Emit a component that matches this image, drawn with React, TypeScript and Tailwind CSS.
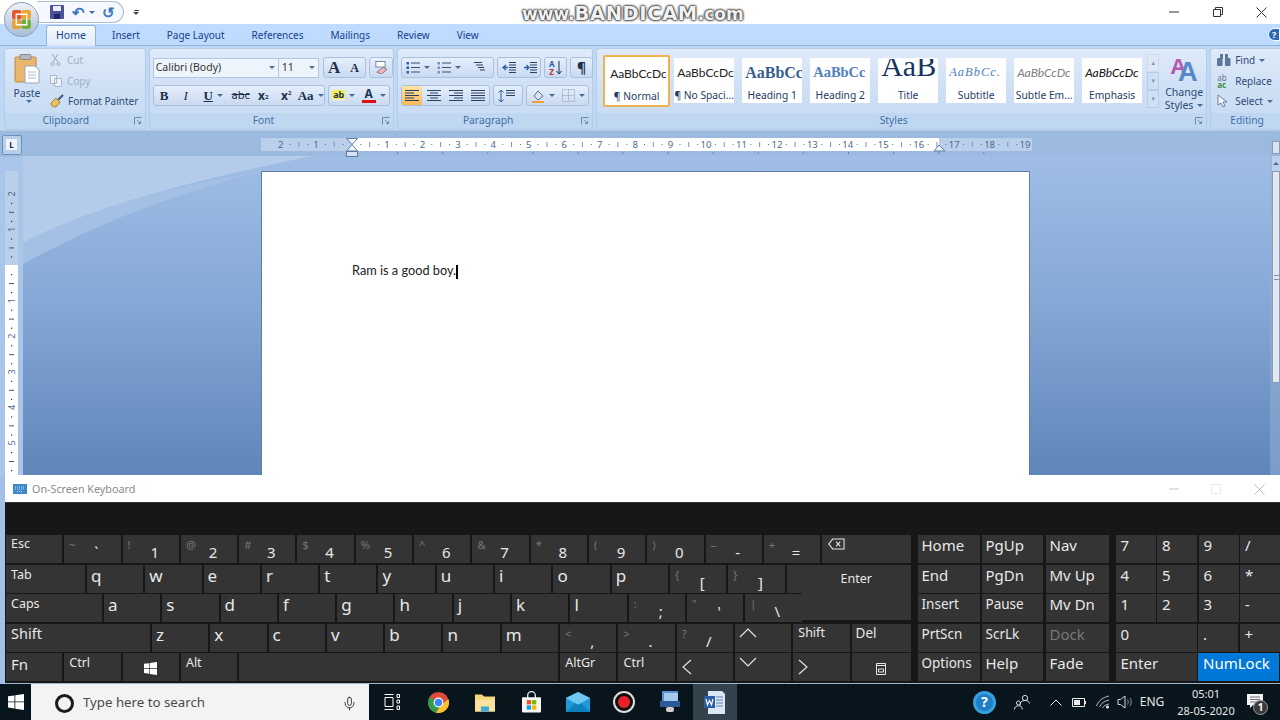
import React from 'react';
import { Mic } from 'lucide-react';

const Win = ({ className = '' }: { className?: string }) => (
  <svg viewBox="0 0 16 16" className={className} fill="currentColor">
    <path d="M0 2.3 6.5 1.4V7.5H0ZM7.3 1.3 16 0V7.5H7.3ZM0 8.3H6.5V14.5L0 13.6ZM7.3 8.3H16V16L7.3 14.7Z" />
  </svg>
);

const Caret = () => <span className="inline-block w-0 h-0 border-x-[3px] border-x-transparent border-t-[3px] border-t-[#4a6a96] ml-1 align-middle" />;

const Launcher = () => (
  <svg viewBox="0 0 8 8" className="w-[8px] h-[8px] absolute right-[3px] bottom-[4px]" fill="none" stroke="#6f8aac">
    <path d="M.5 7.5V.5H7.5M3 3 6.5 6.5M6.5 4V6.5H4" />
  </svg>
);

const Group = ({ label, className, labelClass, children }: { label: string; className: string; labelClass: string; children: React.ReactNode }) => (
  <div className={`relative flex flex-col h-[82px] rounded-[3px] border border-[#b5cbe6] bg-gradient-to-b from-[#dfeafa] via-[#cfe0f5] to-[#c5daf3] ${className}`}>
    <div className="flex-1 min-h-0 flex">{children}</div>
    <div className={`h-[16px] flex items-center justify-center bg-[#c0d7f1] rounded-b-[3px] text-[10.25px] text-[#3f6ea8] ${labelClass}`}>{label}</div>
    {label !== 'Editing' && <Launcher />}
  </div>
);

const Seg = ({ className = '', children }: { className?: string; children: React.ReactNode }) => (
  <div className={`flex items-center h-[21px] rounded-[3px] border border-[#a9c0dc] bg-gradient-to-b from-[#e6effb] to-[#c8daf1] ${className}`}>{children}</div>
);

const Glyph = ({ w, className = '', children }: { w: number; className?: string; children: React.ReactNode }) => (
  <span style={{ width: w }} className={`flex items-center justify-center h-full text-[#1c2f4d] ${className}`}>{children}</span>
);

// small paragraph icon made of horizontal rules
const Lines = ({ widths, x = [] }: { widths: number[]; x?: number[] }) => (
  <svg viewBox="0 0 14 13" className="w-[14px] h-[13px]" stroke="#29405f">
    {widths.map((w, i) => (
      <path key={i} d={`M${x[i] ?? 0} ${1.5 + i * 2.5}h${w}`} />
    ))}
  </svg>
);

const BulletIcon = ({ num }: { num?: boolean }) => (
  <svg viewBox="0 0 14 13" className="w-[14px] h-[13px]">
    {[2, 6.5, 11].map((y) => (
      <g key={y}>
        <rect x="0.5" y={y - 1} width="2.5" height="2.5" fill={num ? '#6f93c4' : '#2c5da8'} />
        <path d={`M5 ${y}h9`} stroke="#3b4f6e" />
      </g>
    ))}
  </svg>
);

const IndentIcon = ({ flip }: { flip?: boolean }) => (
  <svg viewBox="0 0 14 13" className="w-[14px] h-[13px]">
    <path d="M7 1.500h7M7 4h7M7 6.500h7M7 9h7M7 11.500h7" stroke="#29405f" />
    <path d={flip ? 'M1 6.500h4M3.500 4l2.500 2.500L3.500 9' : 'M6 6.500H2M4 4 1 6.500 4 9'} fill="none" stroke="#2c5da8" strokeWidth="1.3" />
  </svg>
);

const StyleCard = ({ sample, label, active, className }: { sample: string; label: string; active?: boolean; className: string }) => (
  <div className={`relative flex flex-col items-center shrink-0 overflow-hidden bg-white ${active ? 'w-[67px] h-[52px] border-2 border-[#f0b24c] rounded-[2px] -my-[3px] -mx-[4px] pt-[2px] px-[2px]' : 'w-[60px] h-[45px]'}`}>
    <div className="h-[28px] mt-[1px] w-full overflow-hidden">
      <div className={`h-full pl-[3px] flex items-center whitespace-nowrap ${className}`}>{sample}</div>
    </div>
    <div className="mt-[1px] text-[10.25px] text-[#1f3a60] whitespace-nowrap">{label}</div>
  </div>
);

const HRuler = () => {
  const ticks: React.ReactNode[] = [];
  for (let n = -2; n <= 19; n++) {
    const x = 351.5 - 261 + n * 35.45;
    ticks.push(
      <text key={n} x={x} y={10} fontSize="9.5" textAnchor="middle" fill="#4d6a90" fontFamily="Noto Sans, sans-serif">
        {Math.abs(n) || ''}
      </text>,
    );
    if (n < 19) {
      ticks.push(<rect key={`a${n}`} x={x + 8.9} y={6} width="1" height="1" fill="#5a7192" />);
      ticks.push(<rect key={`b${n}`} x={x + 17.7} y={4} width="1" height="5" fill="#7d92b0" />);
      ticks.push(<rect key={`c${n}`} x={x + 26.6} y={6} width="1" height="1" fill="#5a7192" />);
    }
  }
  for (let i = 0; i < 14; i++) {
    ticks.push(<rect key={`u${i}`} x={136 + i * 45.1} y={14} width="1" height="2" fill="#6b88ae" />);
  }
  return (
    <svg viewBox="0 0 771 22" className="w-[771px] h-[22px]">
      <rect x="0" y="0" width="771" height="13" fill="#b9cfea" />
      <rect x="91" y="0" width="587" height="13" fill="#ffffff" />
      <g>{ticks}</g>
      <path d="M85.5 0.5h11l-5.5 6 5.5 6.500h-11l5.500 -6.500z" fill="#f2f6fb" stroke="#5f7da3" />
      <rect x="85.5" y="13.5" width="11" height="5" fill="#d6e3f3" stroke="#5f7da3" />
      <path d="M673 13 678 7l6 6z" fill="#eef3fa" stroke="#5f7da3" />
    </svg>
  );
};

const VRuler = () => {
  const marks: React.ReactNode[] = [];
  for (let n = -2; n <= 5; n++) {
    const y = 94 + n * 35.6;
    marks.push(
      <text key={n} x={0} y={0} fontSize="9" textAnchor="middle" fill="#4d6a90" fontFamily="Noto Sans, sans-serif" transform={`translate(9.500 ${y}) rotate(-90)`}>
        {Math.abs(n) || ''}
      </text>,
    );
    marks.push(<rect key={`a${n}`} x={6} y={y + 9} width="1.2" height="1.2" fill="#333" />);
    marks.push(<rect key={`b${n}`} x={4} y={y + 18} width="5" height="1" fill="#555" />);
    marks.push(<rect key={`c${n}`} x={6} y={y + 27} width="1.2" height="1.2" fill="#333" />);
  }
  return (
    <svg viewBox="0 0 13 306" className="w-[13px] h-[306px]">
      <rect width="13" height="306" fill="#b9cfea" rx="1" />
      <rect y="94" width="13" height="212" fill="#ffffff" />
      <g>{marks}</g>
    </svg>
  );
};

type KeyDef = { main?: string; top?: string; w?: string; cls?: string; icon?: React.ReactNode };

const Key = ({ main, top, w = 'w-[56.3px]', cls = 'text-[13px] pl-[6px] pt-[4px]', icon }: KeyDef) => (
  <div className={`relative h-full shrink-0 bg-[#343434] text-[#e8e8e8] leading-none ${w} ${cls}`}>
    {top && <span className="absolute left-[5px] top-[4px] text-[11px] text-[#777]">{top}</span>}
    {main}
    {icon}
  </div>
);

const sym = 'flex items-end justify-center pb-[3px] pl-[8px] text-[15px]';
const letter = 'text-[17px] pl-[4px] pt-[2px]';
const label = 'text-[12.5px] pl-[5px] pt-[3px]';
const label5 = 'text-[12.5px] pl-[5px] pt-[4px]';

const rows: KeyDef[][] = [
  [
    { main: 'Esc', cls: label },
    { main: '`', top: '~', cls: sym },
    ...[['!', '1'], ['@', '2'], ['#', '3'], ['$', '4'], ['%', '5'], ['^', '6'], ['&', '7'], ['*', '8'], ['(', '9'], [')', '0'], ['–', '-'], ['+', '=']].map(([top, main]) => ({ top, main, cls: sym })),
    {
      w: 'flex-1',
      cls: 'pl-[6px] pt-[3px]',
      icon: (
        <svg viewBox="0 0 18 12" className="w-[17px] h-[12px]" fill="none" stroke="#e8e8e8" strokeWidth="1.1">
          <path d="M5 .8H17V11.2H5L.8 6ZM8.5 3.500l4.500 5M13 3.500l-4.500 5" />
        </svg>
      ),
    },
  ],
  [
    { main: 'Tab', w: 'w-[79px]', cls: 'text-[12.5px] pl-[5px] pt-[4px]' },
    ...'qwertyuiop'.split('').map((c) => ({ main: c, cls: letter })),
    { top: '{', main: '[', cls: sym },
    { top: '}', main: ']', cls: sym },
    { main: 'Enter', w: 'flex-1', cls: 'text-[12.5px] pl-[54px] pt-[8px]' },
  ],
  [
    { main: 'Caps', w: 'w-[96px]', cls: 'text-[12.5px] pl-[5px] pt-[4px]' },
    ...'asdfghjkl'.split('').map((c) => ({ main: c, cls: letter })),
    { top: ':', main: ';', cls: sym },
    { top: '"', main: "'", cls: sym },
    { top: '|', main: '\\', cls: sym },
    { w: 'flex-1 -ml-[2px] -mt-[2px] h-[30px]' },
  ],
  [
    { main: 'Shift', w: 'w-[144px]', cls: 'text-[14.5px] pl-[5px] pt-[2px]' },
    ...'zxcvbnm'.split('').map((c) => ({ main: c, cls: letter })),
    { top: '<', main: ',', cls: sym },
    { top: '>', main: '.', cls: sym },
    { top: '?', main: '/', cls: sym },
    {
      cls: 'pl-[4px] pt-[4px]',
      icon: (
        <svg viewBox="0 0 18 10" className="w-[18px] h-[10px]" fill="none" stroke="#e8e8e8" strokeWidth="1.1">
          <path d="M1 9 9 1l8 8" />
        </svg>
      ),
    },
    { main: 'Shift', cls: label },
    { main: 'Del', w: 'flex-1', cls: 'text-[13.5px] pl-[4px] pt-[3px]' },
  ],
  [
    { main: 'Fn', cls: 'text-[15px] pl-[5px] pt-[4px]' },
    { main: 'Ctrl', cls: label5 },
    { cls: 'flex items-center justify-center', icon: <Win className="w-[13px] h-[13px] mt-[2px] text-white" /> },
    { main: 'Alt', cls: label5 },
    { w: 'w-[319px]' },
    { main: 'AltGr', cls: label5 },
    { main: 'Ctrl', cls: label5 },
    {
      cls: 'pl-[5px] pt-[6px]',
      icon: (
        <svg viewBox="0 0 10 16" className="w-[10px] h-[16px]" fill="none" stroke="#e8e8e8" strokeWidth="1.1">
          <path d="M9 1 1 8l8 7" />
        </svg>
      ),
    },
    {
      cls: 'pl-[4px] pt-[4px]',
      icon: (
        <svg viewBox="0 0 18 10" className="w-[18px] h-[10px]" fill="none" stroke="#e8e8e8" strokeWidth="1.1">
          <path d="M1 1l8 8 8-8" />
        </svg>
      ),
    },
    {
      cls: 'pl-[5px] pt-[6px]',
      icon: (
        <svg viewBox="0 0 10 16" className="w-[10px] h-[16px]" fill="none" stroke="#e8e8e8" strokeWidth="1.1">
          <path d="M1 1l8 7-8 7" />
        </svg>
      ),
    },
    {
      w: 'flex-1',
      cls: 'flex items-center justify-center',
      icon: (
        <svg viewBox="0 0 10 12" className="w-[10px] h-[12px] mt-[4px]" fill="none" stroke="#e8e8e8">
          <path d="M.5 .5h9v11h-9zM.5 2.500h9M2.500 6h5v3h-5z" />
        </svg>
      ),
    },
  ],
];

const navRows = [
  [['Home', 'PgUp', 'Nav'], ['7', '8', '9', '/']],
  [['End', 'PgDn', 'Mv Up'], ['4', '5', '6', '*']],
  [['Insert', 'Pause', 'Mv Dn'], ['1', '2', '3', '-']],
  [['PrtScn', 'ScrLk', 'Dock'], ['0', '.', '+']],
  [['Options', 'Help', 'Fade'], ['Enter', 'NumLock']],
];

const NavKey = ({ text, w }: { text: string; w: string }) => (
  <div
    className={`h-full pl-[4px] leading-[20px] bg-[#343434] ${w} ${text === 'Dock' ? 'text-[#777]' : 'text-[#e8e8e8]'} ${
      text === 'Options' || text === 'Insert' || text === 'Pause' || text === 'PrtScn' || text === 'ScrLk' ? 'text-[13.5px]' : 'text-[15px]'
    }`}
  >
    {text}
  </div>
);

const PadKey = ({ text, wide }: { text: string; wide?: boolean }) => (
  <div
    className={`h-full pl-[5px] leading-[20px] text-[15px] ${wide ? 'w-[81px]' : 'w-[40px]'} ${
      text === 'NumLock' ? 'bg-[#0078d7] text-white' : 'bg-[#343434] text-[#e8e8e8]'
    }`}
  >
    {text}
  </div>
);

const Keyboard = () => (
  <div className="flex flex-col h-[209px] pl-[5px]">
    <div className="h-[28px] pt-[1px] bg-white flex items-center pl-[8px] border-b border-[#333]">
      <svg viewBox="0 0 14 10" className="w-[14px] h-[10px]">
        <rect width="14" height="10" fill="#3d88c8" />
        <path d="M2 3h10M2 5h10M4 7.500h6" stroke="#bfe0f7" strokeDasharray="1 1" />
      </svg>
      <span className="ml-[5px] text-[10.75px] text-[#8a8a8a]">On-Screen Keyboard</span>
      <div className="ml-auto flex items-center text-[#b9b9b9]">
        <svg viewBox="0 0 12 12" className="w-[10px] h-[10px]" stroke="currentColor"><path d="M0 6h12" /></svg>
        <svg viewBox="0 0 12 12" className="w-[10px] h-[10px] ml-[32px]" fill="none" stroke="#e2e2e2"><path d="M.5 .5h11v11H.5z" /></svg>
        <svg viewBox="0 0 12 12" className="w-[11px] h-[11px] ml-[33px] mr-[15px]" stroke="currentColor"><path d="M.5 .5l11 11M11.500 .5l-11 11" /></svg>
      </div>
    </div>
    <div className="flex-1 bg-[#171717] pt-[32px] pl-[1px] flex border-b border-[#9fb6cc]">
      <div className="w-[905px] flex flex-col gap-y-[1.5px]">
        {rows.map((row, i) => (
          <div key={i} className="flex gap-x-[2px] h-[28px]">
            {row.map((k, j) => (
              <Key key={j} {...k} />
            ))}
          </div>
        ))}
      </div>
      <div className="ml-[7px] w-[191px] flex flex-col gap-y-[1.5px]">
        {navRows.map(([nav], i) => (
          <div key={i} className="flex h-[28px]">
            <NavKey text={nav[0]} w="w-[62px] mr-[2px]" />
            <NavKey text={nav[1]} w="w-[61px] mr-[3px]" />
            <NavKey text={nav[2]} w="w-[63px]" />
          </div>
        ))}
      </div>
      <div className="ml-[7px] flex-1 flex flex-col gap-y-[1.5px]">
        {navRows.map(([, pad], i) => (
          <div key={i} className="flex gap-x-[1.5px] h-[28px]">
            {pad.map((t) => (
              <PadKey key={t} text={t} wide={t === '0' || t === 'Enter' || t === 'NumLock'} />
            ))}
          </div>
        ))}
      </div>
    </div>
  </div>
);

const Taskbar = () => (
  <div className="h-[36px] bg-[#09151d] flex items-center text-white shrink-0">
    <div className="w-[31px] flex justify-center">
      <Win className="w-[16px] h-[16px]" />
    </div>
    <div className="w-[338px] h-full pt-[2px] bg-[#f3f3f3] flex items-center pl-[24px] pr-[12px] text-[#333]">
      <span className="w-[19px] h-[19px] rounded-full border-[3px] border-[#1b1b1b]" />
      <span className="ml-[9px] text-[13.25px] text-[#4a4a4a]">Type here to search</span>
      <Mic className="ml-auto w-[15px] h-[17px] text-[#333]" strokeWidth={1.5} />
    </div>
    <div className="w-[46px] flex justify-center">
      <svg viewBox="0 0 16 16" className="w-[16px] h-[16px]" fill="none" stroke="#fff">
        <path d="M.5 .5h9M.5 15.500h9M1 3.500h8v9H1zM13 .5h2.500v3H13zM13 6h2.500v3H13zM13 12h2.500v3.500H13z" />
      </svg>
    </div>
    <div className="w-[47px] flex justify-center">
      <svg viewBox="0 0 20 20" className="w-[21px] h-[21px]">
        <circle cx="10" cy="10" r="10" fill="#dd4b39" />
        <path d="M1.500 4.800A10 10 0 0 0 7.600 19.700L12 11z" fill="#2e9e4c" />
        <path d="M19.400 6.600A10 10 0 0 1 7.600 19.700L12 13z" fill="#fbc02d" />
        <circle cx="10" cy="10" r="4.700" fill="#fff" />
        <circle cx="10" cy="10" r="3.600" fill="#4285f4" />
      </svg>
    </div>
    <div className="w-[46px] flex justify-center">
      <svg viewBox="0 0 20 18" className="w-[20px] h-[19px]">
        <path d="M0 1h7l2 2h11v15H0z" fill="#f5d67a" />
        <path d="M0 6h20v12H0z" fill="#f9e29c" />
        <rect x="6" y="13" width="8" height="5" fill="#3fa9d9" />
      </svg>
    </div>
    <div className="w-[46px] flex justify-center">
      <svg viewBox="0 0 20 22" className="w-[19px] h-[22px]">
        <path d="M6 7V4a4 4 0 0 1 8 0v3" fill="none" stroke="#ddd" strokeWidth="1.5" />
        <rect y="6" width="20" height="16" rx="1" fill="#f6f6f6" />
        <rect x="5" y="9" width="4.500" height="4.500" fill="#f25022" />
        <rect x="10.500" y="9" width="4.500" height="4.500" fill="#7fba00" />
        <rect x="5" y="14.500" width="4.500" height="4.500" fill="#00a4ef" />
        <rect x="10.500" y="14.500" width="4.500" height="4.500" fill="#ffb900" />
      </svg>
    </div>
    <div className="w-[47px] flex justify-center">
      <svg viewBox="0 0 24 20" className="w-[24px] h-[22px]">
        <path d="M0 6 12 0l12 6v14H0z" fill="#1a9ad6" />
        <path d="M0 6 12 13 24 6 12 0z" fill="#6fc6ee" />
        <path d="M0 20 9 11l3 2 3-2 9 9z" fill="#0f7fbd" />
      </svg>
    </div>
    <div className="w-[46px] flex justify-center">
      <span className="w-[22px] h-[22px] rounded-full bg-[#111] border-2 border-[#ddd] flex items-center justify-center">
        <span className="w-[12px] h-[12px] rounded-full bg-[#e8202a]" />
      </span>
    </div>
    <div className="w-[46px] flex justify-center">
      <svg viewBox="0 0 20 24" className="w-[20px] h-[24px]">
        <rect x="2" y="1" width="16" height="13" fill="#5a8fd0" />
        <rect x="4" y="3" width="14" height="8" fill="#a7c8ec" />
        <rect y="11" width="20" height="6" fill="#2c5a96" />
        <rect x="6" y="17" width="8" height="5" rx="2" fill="#cfcfcf" />
      </svg>
    </div>
    <div className="w-[44px] h-full bg-[#33424c] flex justify-center items-center">
      <svg viewBox="0 0 22 24" className="w-[22px] h-[24px]">
        <path d="M4 1h14l3 3v20H4z" fill="#dbe7f5" />
        <path d="M12 7h7M12 10h7M12 13h7M12 16h7" stroke="#5d7fae" />
        <rect x="0" y="6" width="11" height="12" fill="#2b5da5" />
        <path d="M2 9l1.500 6 2-4.500 2 4.500L9 9" fill="none" stroke="#fff" strokeWidth="1.2" />
      </svg>
    </div>
    <div className="flex-1" />
    <svg viewBox="0 0 24 24" className="w-[23px] h-[23px] mr-[18px]">
      <circle cx="12" cy="12" r="12" fill="#3aa0dd" />
      <circle cx="12" cy="12" r="9" fill="#1e7fc7" />
      <text x="12" y="17" fontSize="15" fontWeight="700" textAnchor="middle" fill="#fff" fontFamily="Noto Sans, sans-serif">?</text>
    </svg>
    <svg viewBox="0 0 16 16" className="w-[16px] h-[16px] mr-[20px]" fill="none" stroke="#ddd">
      <circle cx="11" cy="4" r="2.600" />
      <path d="M6 11c0-3 2-4.500 5-4.500s4 1 4.500 3" />
      <circle cx="4.500" cy="9" r="2" />
      <path d="M.5 15.500c0-2.400 1.600-3.700 4-3.700s3.700 1 3.700 3.700" />
    </svg>
    <svg viewBox="0 0 12 7" className="w-[12px] h-[7px] mr-[10px]" fill="none" stroke="#eee">
      <path d="M.5 6.500 6 1l5.500 5.500" />
    </svg>
    <svg viewBox="0 0 14 9" className="w-[14px] h-[9px] mr-[10px]" fill="none" stroke="#eee">
      <path d="M.5 .5h12v8H.5z" />
      <rect x="2" y="2" width="6" height="5" fill="#eee" stroke="none" />
      <path d="M13.500 3v3" />
    </svg>
    <svg viewBox="0 0 14 14" className="w-[14px] h-[14px] mr-[7px]" fill="none" stroke="#b9c0c5">
      <path d="M.5 11C3 5 7 2.500 13 1M3.500 12C5 8.500 8 6 13 5M6.500 13C7.500 11 10 9.500 13 9" />
      <circle cx="11.500" cy="12" r="1.500" fill="#eee" stroke="none" />
    </svg>
    <svg viewBox="0 0 16 14" className="w-[16px] h-[14px] mr-[1px]" fill="none" stroke="#d8d8d8">
      <path d="M1 4.500h2.500L8 1v12L3.500 9.500H1z" />
      <path d="M10.500 4.500c1 1.500 1 3.500 0 5M13 3c1.700 2.500 1.700 5.500 0 8" stroke="#8a9399" />
    </svg>
    <span className="text-[12px] text-[#e8e8e8] w-[36px] text-center">ENG</span>
    <div className="ml-[4px] w-[64px] flex flex-col items-center text-[11px] leading-[17px] text-[#e8e8e8]">
      <span>05:01</span>
      <span>28-05-2020</span>
    </div>
    <div className="relative ml-[1px] w-[41px] h-full">
      <svg viewBox="0 0 16 14" className="absolute left-[8px] top-[10px] w-[16px] h-[14px]">
        <path d="M0 0h16v11H6l-3 3v-3H0z" fill="#f4f4f4" />
        <path d="M3 3h10M3 5.500h10M3 8h7" stroke="#6b7278" />
      </svg>
      <span className="absolute left-[14px] top-[16px] w-[15px] h-[15px] rounded-full bg-[#3a3a3a] border border-[#9b9b9b] text-[10px] leading-[13px] font-bold text-center text-white">1</span>
    </div>
  </div>
);

const Ribbon = () => (
  <div className="h-[85px] bg-[#bfd8f5] flex pl-[4px] pt-[2px] gap-x-[3px] border-b border-[#b3cbe6] text-[10px] text-[#2b4a78] shrink-0">
    <Group label="Clipboard" className="w-[142px]" labelClass="pr-[18px]">
      <div className="w-[44px] flex flex-col items-center pt-[5px]">
        <svg viewBox="0 0 26 30" className="w-[26px] h-[30px]">
          <rect x="1" y="3" width="21" height="25" rx="1" fill="#eab76a" stroke="#b98a45" />
          <rect x="6" y="0.5" width="11" height="5" rx="1" fill="#b9b9b9" stroke="#8c8c8c" />
          <path d="M11 12h10l4 4v13H11z" fill="#fff" stroke="#96a7bd" />
          <path d="M14 18h8M14 21h8M14 24h8" stroke="#aeb9c9" />
        </svg>
        <span className="mt-[3px] leading-[13px] text-[10.5px] text-[#2b4a78]">Paste</span>
        <Caret />
      </div>
      <div className="flex-1 flex flex-col pt-[1px] pl-[1px] leading-[20.500px] whitespace-nowrap">
        <div className="flex items-center text-[#9db0c7]">
          <svg viewBox="0 0 12 12" className="w-[12px] h-[12px] mr-[5px]" fill="none" stroke="#9aa9bb"><path d="M2 0l6 8M8 0 3 8" /><circle cx="2.500" cy="10" r="1.600" /><circle cx="8.500" cy="10" r="1.600" /></svg>
          Cut
        </div>
        <div className="flex items-center text-[#9db0c7]">
          <svg viewBox="0 0 12 12" className="w-[12px] h-[12px] mr-[5px]" fill="#eef3f9" stroke="#a9b7c7"><path d="M.5 .5h6v8h-6zM4.500 3.500h7v8h-7z" /></svg>
          Copy
        </div>
        <div className="flex items-center text-[#2b4a78]">
          <svg viewBox="0 0 14 14" className="w-[14px] h-[14px] mr-[4px]"><path d="M8 6 13 1" stroke="#3c5a85" strokeWidth="2" /><path d="M1 9l5-5 4 4-4 5c-3 0-5-1-5-4z" fill="#e8c25e" stroke="#a27f32" /></svg>
          Format Painter
        </div>
      </div>
    </Group>
    <Group label="Font" className="w-[246px]" labelClass="pr-[16px]">
      <div className="flex flex-col pl-[3px] pt-[8px] gap-y-[7px]">
        <div className="flex items-center">
          <div className="w-[126px] h-[20px] bg-[#eef4fc] border border-[#b3c7e0] flex items-center pl-[2px] text-[10.5px] text-[#333]">
            Calibri (Body)<span className="ml-auto mr-[3px]"><Caret /></span>
          </div>
          <div className="w-[40px] h-[20px] bg-[#eef4fc] border border-l-0 border-[#b3c7e0] flex items-center pl-[3px] text-[10.5px] text-[#333]">
            11<span className="ml-auto mr-[3px]"><Caret /></span>
          </div>
          <Seg className="ml-[4px]">
            <Glyph w={21} className="text-[17px] font-bold font-['Liberation_Serif',serif]">A</Glyph>
            <Glyph w={20} className="text-[12px] font-bold font-['Liberation_Serif',serif]">A</Glyph>
          </Seg>
          <Seg className="ml-[3px]">
            <Glyph w={22}>
              <svg viewBox="0 0 16 14" className="w-[15px] h-[13px]"><rect x="3" y="0.5" width="10" height="6" fill="#fff" stroke="#6b7f9c" /><path d="M4 12 11 7l4 2-6 5z" fill="#f2b7c0" stroke="#8d6b78" /></svg>
            </Glyph>
          </Seg>
        </div>
        <div className="flex items-center">
          <Seg>
            <Glyph w={21} className="text-[13px] font-bold font-['Liberation_Serif',serif]">B</Glyph>
            <Glyph w={22} className="text-[13px] italic font-['Liberation_Serif',serif]">I</Glyph>
            <Glyph w={33} className="text-[13px] font-bold underline font-['Liberation_Serif',serif]">U<Caret /></Glyph>
            <Glyph w={22} className="text-[11px] line-through">abc</Glyph>
            <Glyph w={23} className="text-[12px] font-bold">x<sub className="text-[6px]">2</sub></Glyph>
            <Glyph w={23} className="text-[12px] font-bold">x<sup className="text-[6px]">2</sup></Glyph>
            <Glyph w={26} className="text-[13px] font-bold font-['Liberation_Serif',serif]">Aa<Caret /></Glyph>
          </Seg>
          <Seg className="ml-[3px]">
            <Glyph w={30}>
              <span className="relative text-[9px] font-bold leading-[9px] bg-[#f5ee5a] px-[1px] border-b-2 border-b-[#e6e6e6]">ab</span><Caret />
            </Glyph>
            <Glyph w={30}>
              <span className="flex flex-col items-center text-[12px] font-bold leading-[12px] text-[#1a3559]">A<span className="w-[14px] h-[3px] bg-[#e01010]" /></span><Caret />
            </Glyph>
          </Seg>
        </div>
      </div>
    </Group>
    <Group label="Paragraph" className="w-[196px]" labelClass="pr-[14px]">
      <div className="flex flex-col pl-[3px] pt-[8px] gap-y-[7px]">
        <div className="flex items-center">
          <Seg>
            <Glyph w={31}><BulletIcon /><Caret /></Glyph>
            <Glyph w={32}><BulletIcon num /><Caret /></Glyph>
            <Glyph w={28}><Lines widths={[8, 7, 6, 5]} x={[2, 4, 6, 8]} /></Glyph>
          </Seg>
          <Seg className="ml-[3px]">
            <Glyph w={21}><IndentIcon /></Glyph>
            <Glyph w={21}><IndentIcon flip /></Glyph>
          </Seg>
          <Seg className="ml-[3px]">
            <Glyph w={21} className="text-[8px] font-bold">
              <span className="flex flex-col leading-[8px] text-center"><span className="text-[#2c5da8]">A</span><span className="text-[#c03030]">Z</span></span>
              <svg viewBox="0 0 6 14" className="w-[6px] h-[14px] ml-[2px]" fill="none" stroke="#1c2f4d"><path d="M3 0v13M.5 10 3 13l2.500-3" /></svg>
            </Glyph>
          </Seg>
          <Seg className="ml-[3px]">
            <Glyph w={21} className="text-[14px] font-bold">¶</Glyph>
          </Seg>
        </div>
        <div className="flex items-center">
          <Seg>
            <Glyph w={20} className="bg-gradient-to-b from-[#fde5a5] to-[#fbb858]"><Lines widths={[14, 9, 14, 9, 14]} /></Glyph>
            <Glyph w={23}><Lines widths={[14, 8, 14, 8, 14]} x={[0, 3, 0, 3, 0]} /></Glyph>
            <Glyph w={22}><Lines widths={[14, 9, 14, 9, 14]} x={[0, 5, 0, 5, 0]} /></Glyph>
            <Glyph w={22}><Lines widths={[14, 14, 14, 14, 14]} /></Glyph>
          </Seg>
          <Seg className="ml-[3px]">
            <Glyph w={28}>
              <svg viewBox="0 0 6 14" className="w-[6px] h-[14px] mr-[1px]" fill="none" stroke="#2c5da8"><path d="M3 1v12M.5 3.500 3 1l2.500 2.500M.5 10.500 3 13l2.500-2.500" /></svg>
              <Lines widths={[9, 9, 9]} x={[1, 1, 1]} />
            </Glyph>
          </Seg>
          <Seg className="ml-[3px]">
            <Glyph w={31}>
              <svg viewBox="0 0 14 14" className="w-[14px] h-[14px]"><path d="M3 7 7 2l5 5-5 4z" fill="#dbe7f5" stroke="#546b8c" /><rect x="1" y="12" width="12" height="2" fill="#f0a030" /></svg><Caret />
            </Glyph>
            <Glyph w={30}>
              <svg viewBox="0 0 13 13" className="w-[13px] h-[13px]" fill="none" stroke="#8b9db6" strokeDasharray="1 1"><path d="M.5 .5h12v12H.5zM.5 6.500h12M6.500 .5v12" /></svg><Caret />
            </Glyph>
          </Seg>
        </div>
      </div>
    </Group>
    <Group label="Styles" className="w-[611px]" labelClass="pr-[16px]">
      <div className="flex pl-[10px] pt-[9px] gap-x-[8px]">
        <StyleCard active sample="AaBbCcDc" label="¶ Normal" className="text-[12px] text-[#222] font-['Lato',sans-serif]" />
        <StyleCard sample="AaBbCcDc" label="¶ No Spaci..." className="text-[12px] text-[#222] font-['Lato',sans-serif]" />
        <StyleCard sample="AaBbCc" label="Heading 1" className="text-[16px] font-bold text-[#365f91] font-['Liberation_Serif',serif]" />
        <StyleCard sample="AaBbCc" label="Heading 2" className="text-[14.5px] font-bold text-[#4f81bd] font-['Liberation_Serif',serif]" />
        <StyleCard sample="AaB" label="Title" className="text-[30px] text-[#17365d] font-['Liberation_Serif',serif] -mt-[7px]" />
        <StyleCard sample="AaBbCc." label="Subtitle" className="text-[12.5px] italic tracking-[1px] text-[#4f81bd] font-['Liberation_Serif',serif]" />
        <StyleCard sample="AaBbCcDc" label="Subtle Em..." className="text-[12px] italic text-[#808080] font-['Lato',sans-serif]" />
        <StyleCard sample="AaBbCcDc" label="Emphasis" className="text-[12px] italic text-[#111] font-['Lato',sans-serif]" />
      </div>
      <div className="ml-[5px] mt-[5px] w-[13px] h-[55px] flex flex-col text-[#7f97b5] text-[6px] leading-[16px] text-center">
        <span className="h-[18px] bg-[#dfe9f6] border border-[#cfdcec]">▲</span>
        <span className="h-[18px] bg-[#cfe0f5] border border-[#b7cce6]">▼</span>
        <span className="h-[18px] bg-[#cfe0f5] border border-[#b7cce6]">▼</span>
      </div>
      <div className="ml-[3px] w-[48px] flex flex-col items-center pt-[6px] leading-[12.500px] text-[10.5px] text-[#2b4a78]">
        <svg viewBox="0 0 32 28" className="w-[30px] h-[27px]">
          <text x="10" y="20" fontSize="24" fontWeight="700" fill="#b35ab0" textAnchor="middle" fontFamily="Liberation Sans, sans-serif">A</text>
          <text x="20" y="27" fontSize="29" fontWeight="700" fill="#5588c4" textAnchor="middle" fontFamily="Liberation Sans, sans-serif">A</text>
        </svg>
        <span className="mt-[4px]">Change</span>
        <span>Styles<Caret /></span>
      </div>
    </Group>
    <Group label="Editing" className="w-[70px] rounded-r-none border-r-0" labelClass="pl-[3px]">
      <div className="flex flex-col pl-[6px] pt-[1px] leading-[20.500px] whitespace-nowrap">
        <div className="flex items-center">
          <svg viewBox="0 0 14 12" className="w-[14px] h-[12px] mr-[4px]" fill="#5d7699"><rect x="0" y="4" width="5.500" height="8" rx="1" /><rect x="8" y="4" width="5.500" height="8" rx="1" /><rect x="3" y="0" width="3" height="5" /><rect x="8" y="0" width="3" height="5" /></svg>
          Find<Caret />
        </div>
        <div className="flex items-center">
          <span className="text-[8px] leading-[7px] w-[14px] mr-[4px] text-[#5d7699]">ab<br /><span className="text-[#3c8f3c] font-bold">ac</span></span>
          Replace
        </div>
        <div className="flex items-center">
          <svg viewBox="0 0 12 14" className="w-[12px] h-[14px] mr-[6px]" fill="#f4f7fb" stroke="#6d7f99"><path d="M1 1v10l3-2 2 4 2-1-2-4h4z" /></svg>
          Select<Caret />
        </div>
      </div>
    </Group>
  </div>
);

const tabs = ['Insert', 'Page Layout', 'References', 'Mailings', 'Review', 'View'];

export default function App() {
  return (
    <div className="w-[1280px] h-[720px] flex flex-col overflow-hidden bg-[#a3c0e6] font-['Noto_Sans',sans-serif]">
      {/* title bar */}
      <div className="relative h-[24px] bg-white flex items-center shrink-0">
        <div className="absolute z-10 left-[4px] top-[2px] w-[35px] h-[35px] rounded-full bg-gradient-to-b from-[#eef2f7] to-[#a9bdd5] border border-[#8aa0bb] flex items-center justify-center">
          <svg viewBox="0 0 20 20" className="w-[21px] h-[21px]">
            <rect x="1" y="1" width="9" height="9" rx="2" fill="#e2572b" />
            <rect x="10" y="1" width="9" height="9" rx="2" fill="#f0a530" />
            <rect x="1" y="10" width="9" height="9" rx="2" fill="#e8a23a" />
            <rect x="10" y="10" width="9" height="9" rx="2" fill="#6fae3f" />
            <path d="M5 5h10v10H5z" fill="none" stroke="#fff" strokeWidth="1.2" />
          </svg>
        </div>
        <div className="ml-[37px] h-[22px] w-[87px] border border-l-0 border-[#a9bdd5] rounded-r-[12px] bg-[#f5f8fc] flex items-center pl-[13px]">
          <svg viewBox="0 0 14 14" className="w-[14px] h-[14px]">
            <rect width="14" height="14" rx="1" fill="#4a4f9e" />
            <rect x="3" y="1" width="8" height="5" fill="#e8edf5" />
            <rect x="4" y="9" width="6" height="5" fill="#1f2860" />
          </svg>
          <span className="ml-[8px] text-[15px] leading-none font-bold text-[#3b78c4]">↶</span>
          <Caret />
          <span className="ml-[7px] text-[15px] leading-none font-bold text-[#3b78c4]">↺</span>
        </div>
        <div className="ml-[9px] flex flex-col items-center gap-y-[1px]">
          <span className="w-[5px] h-[1px] bg-[#444]" />
          <span className="w-0 h-0 border-x-[3px] border-x-transparent border-t-[3px] border-t-[#444]" />
        </div>
        <span className="absolute left-[522px] top-[3px] whitespace-nowrap leading-[22px] font-bold text-[#f2f2f2] font-['DejaVu_Sans',sans-serif] text-[17px] [text-shadow:0_0_2px_#222,0_0_2px_#222,0_0_3px_#222]">
          www.<span className="text-[19.5px] tracking-[0.6px]">BANDICAM</span>.com
        </span>
        <div className="ml-auto flex items-center text-[#333]">
          <svg viewBox="0 0 10 10" className="w-[10px] h-[10px]" stroke="currentColor"><path d="M0 5h10" /></svg>
          <svg viewBox="0 0 10 10" className="w-[10px] h-[10px] ml-[34px]" fill="none" stroke="currentColor"><path d="M.5 2.500h7v7h-7zM2.500 2.500v-2h7v7h-2" /></svg>
          <svg viewBox="0 0 11 11" className="w-[11px] h-[11px] ml-[33px] mr-[13px]" stroke="currentColor"><path d="M.5 .5l10 10M10.500 .5l-10 10" /></svg>
        </div>
      </div>

      {/* tabs */}
      <div className="relative h-[22px] bg-[#bfdbff] flex items-end pl-[46px] text-[10px] text-[#15428b] shrink-0 border-b border-[#8fb2db]">
        <div className="w-[50px] h-[21px] -mb-[1px] bg-gradient-to-b from-[#f6fafe] to-[#dfeafa] border border-b-0 border-[#8fb2db] rounded-t-[3px] flex items-center justify-center text-[10.5px]">Home</div>
        <div className="flex h-full pt-[2px] items-center gap-x-[27px] ml-[16px]">
          {tabs.map((t) => (
            <span key={t}>{t}</span>
          ))}
        </div>
        <span className="absolute right-[0px] top-[4px] w-[12px] h-[13px] rounded-l-full bg-[#2d6ab3] border border-white text-white text-[9px] font-bold leading-[11px] pl-[3px]">?</span>
      </div>

      <Ribbon />

      {/* document area */}
      <div className="relative flex-1 min-h-0 overflow-hidden bg-gradient-to-b from-[#a4c1e8] via-[#86a8d6] to-[#5f85b9]">
        <div className="absolute inset-x-0 top-0 h-[25px] bg-[#9cbae0]" />
        <svg viewBox="0 0 300 110" className="absolute left-[23px] top-[25px] w-[300px] h-[110px]" preserveAspectRatio="none">
          <path d="M0 0H290C180 22 70 50 0 87Z" fill="#b4cbea" />
          <path d="M0 87C70 50 160 28 240 15C140 40 60 75 0 108Z" fill="#a5c0e5" />
        </svg>
        <div className="relative h-full flex">
          {/* left ruler column */}
          <div className="w-[23px] flex flex-col items-center pt-[4px] bg-gradient-to-b from-[#9cbae0] from-[25px] to-[#a9c5ea] to-[26px]">
            <div className="w-[20px] h-[20px] rounded-[2px] border border-[#6c8fbd] bg-[#b8cfea] flex items-center justify-center">
              <span className="w-[11px] h-[11px] bg-[#eef4fb] flex items-center justify-center text-[8px] font-bold leading-none text-[#16263f]">L</span>
            </div>
            <div className="mt-[16px] overflow-hidden">
              <VRuler />
            </div>
          </div>
          <div className="w-[238px] shrink-0" />
          <div className="flex flex-col flex-none">
            <div className="h-[40px] pt-[7px]">
              <HRuler />
            </div>
            <div className="w-[769px] flex-1 bg-white border border-b-0 border-[#5f7ea6] pl-[90px] pt-[89px] font-['Lato',sans-serif] text-[12.75px] text-[#222] leading-[18px]">
              Ram is a good boy.<span className="inline-block w-[1.5px] h-[14px] bg-black align-middle" />
            </div>
          </div>
          {/* scroll bar */}
          <div className="ml-auto w-[10px] flex flex-col pl-[2px] bg-gradient-to-b from-[#9cbae0] to-[#7c9cc9]">
            <div className="mt-[10px] h-[13px] bg-[#dbe3ee] border border-[#8a9db5]" />
            <div className="mt-[2px] h-[15px] bg-[#bcd0ea] flex justify-center items-center">
              <span className="w-0 h-0 border-x-[3px] border-x-transparent border-b-[3px] border-b-[#4a6a96]" />
            </div>
            <div className="h-[212px] bg-[#e3e9f3] border border-[#8a9db5] flex items-center justify-center">
              <span className="w-[5px] h-[5px] border-y border-[#7f8fa6]" />
            </div>
          </div>
        </div>
      </div>

      <Keyboard />
      <Taskbar />
    </div>
  );
}
